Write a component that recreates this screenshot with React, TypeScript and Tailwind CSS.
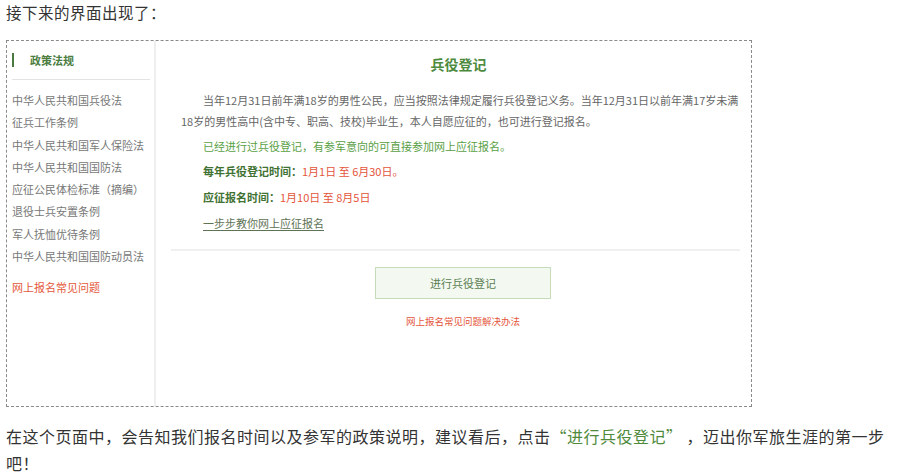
import React from "react";

const font = "font-['Noto_Sans_CJK_SC','Noto_Sans',sans-serif]";

export default function App() {
  const items = [
    "中华人民共和国兵役法",
    "征兵工作条例",
    "中华人民共和国军人保险法",
    "中华人民共和国国防法",
    "应征公民体检标准（摘编）",
    "退役士兵安置条例",
    "军人抚恤优待条例",
    "中华人民共和国国防动员法",
  ];
  return (
    <div className={`w-[899px] h-[474px] bg-white overflow-hidden ${font}`}>
      <p className="pl-[6px] text-[15.5px] leading-[24px] tracking-[0.5px] text-[#333]">接下来的界面出现了：</p>
      <div className="ml-[6px] mt-[16px] w-[746px] h-[367px] border border-dashed border-[#8a8a8a] flex">
        {/* sidebar */}
        <div className="w-[149px] pl-[5px] pr-[4px] border-r-2 border-[#efefef]">
          <div className="mt-[12px] h-[14px] flex items-center">
            <div className="w-[2px] h-[14px] bg-[#4a7a3f]" />
            <span className="ml-[16px] text-[11px] font-bold text-[#4b7d3f] leading-[14px]">政策法规</span>
          </div>
          <div className="mt-[12px] border-b border-[#e3e3e3]" />
          <ul className="mt-[9px]">
            {items.map((t) => (
              <li key={t} className="text-[11px] leading-[22.3px] text-[#777] whitespace-nowrap">
                {t}
              </li>
            ))}
          </ul>
          <div className="mt-[9px] text-[11px] leading-[22px] text-[#e4583c]">网上报名常见问题</div>
        </div>
        {/* main */}
        <div className="flex-1 pl-[15px] pr-[11px]">
          <h1 className="pt-[13px] pl-[6px] text-center text-[14px] leading-[20px] font-bold text-[#4e8a3e]">兵役登记</h1>
          <div className="pl-[10px] text-[11px] text-[#666]">
            <p className="mt-[16px] leading-[21px] indent-[22px] whitespace-nowrap">
              当年12月31日前年满18岁的男性公民，应当按照法律规定履行兵役登记义务。当年12月31日以前年满17岁未满
              <br />
              18岁的男性高中(含中专、职高、技校)毕业生，本人自愿应征的，也可进行登记报名。
            </p>
            <p className="mt-[4px] leading-[21px] indent-[22px] text-[#59a045]">
              已经进行过兵役登记，有参军意向的可直接参加网上应征报名。
            </p>
            <p className="mt-[4px] leading-[21px] indent-[22px]">
              <span className="font-bold text-[#3f7233]">每年兵役登记时间：</span>
              <span className="text-[#e4553b]">1月1日 至 6月30日。</span>
            </p>
            <p className="mt-[5px] leading-[21px] indent-[22px]">
              <span className="font-bold text-[#3f7233]">应征报名时间：</span>
              <span className="text-[#e4553b]">1月10日 至 8月5日</span>
            </p>
            <p className="mt-[5px] leading-[21px] indent-[22px]">
              <span className="underline underline-offset-2 text-[#5e7256]">一步步教你网上应征报名</span>
            </p>
          </div>
          <div className="mt-[15px] border-t-2 border-[#f0f0f0]" />
          <div className="pl-[15px] flex flex-col items-center">
            <div className="mt-[16px] w-[176px] h-[32px] border border-[#c5dcbb] bg-[#f3f9f0] flex items-center justify-center text-[11px] text-[#5b7d52]">
              进行兵役登记
            </div>
            <div className="mt-[15px] text-[9.5px] leading-[14px] text-[#e4553b]">网上报名常见问题解决办法</div>
          </div>
        </div>
      </div>
      <p className="mt-[16px] pl-[6px] text-[16px] leading-[27px] tracking-[0.5px] text-[#333] whitespace-nowrap">
        在这个页面中，会告知我们报名时间以及参军的政策说明，建议看后，点击<span className="text-[#4f8a3c]">“进行兵役登记”</span> ，迈出你军旅生涯的第一步
        <br />
        吧！
      </p>
    </div>
  );
}
